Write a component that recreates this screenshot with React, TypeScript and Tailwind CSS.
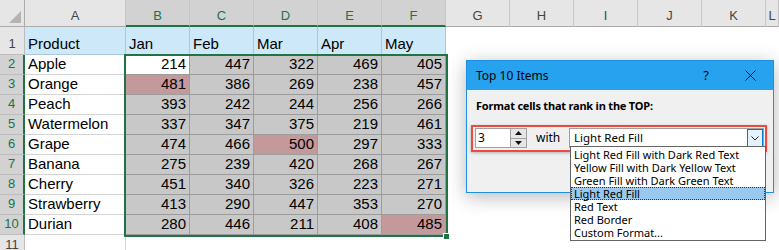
import React from "react";

const COLS = ["A", "B", "C", "D", "E", "F", "G", "H", "I", "J", "K", "L"];
const SELECTED = ["B", "C", "D", "E", "F"];

const HEAD = ["Product", "Jan", "Feb", "Mar", "Apr", "May"];

const ROWS: [string, number[]][] = [
  ["Apple", [214, 447, 322, 469, 405]],
  ["Orange", [481, 386, 269, 238, 457]],
  ["Peach", [393, 242, 244, 256, 266]],
  ["Watermelon", [337, 347, 375, 219, 461]],
  ["Grape", [474, 466, 500, 297, 333]],
  ["Banana", [275, 239, 420, 268, 267]],
  ["Cherry", [451, 340, 326, 223, 271]],
  ["Strawberry", [413, 290, 447, 353, 270]],
  ["Durian", [280, 446, 211, 408, 485]],
];

// top 3 values -> light red fill
const TOP = new Set(["1-0", "4-2", "8-4"]);

const FORMATS = [
  "Light Red Fill with Dark Red Text",
  "Yellow Fill with Dark Yellow Text",
  "Green Fill with Dark Green Text",
  "Light Red Fill",
  "Red Text",
  "Red Border",
  "Custom Format...",
];

function RowHeader({ n, selected }: { n: number; selected?: boolean }) {
  return (
    <div
      className={
        selected
          ? "flex items-end justify-center border-b border-[#bdbdbd] border-r-2 border-r-[#217346] bg-[#d2d2d2] pb-px text-[13px] text-[#217346]"
          : "flex items-end justify-center border-b border-r border-[#bdbdbd] bg-[#e6e6e6] pb-px text-[13px] text-[#444]"
      }
    >
      {n}
    </div>
  );
}

function Sheet() {
  return (
    <div className="grid h-[250px] grid-cols-[25px_101px_64px_64px_64px_64px_64px_64px_64px_64px_64px_64px_1fr] grid-rows-[27px_28px_repeat(9,20px)_1fr] font-['Liberation_Sans',Arial,sans-serif] text-[15px] text-black">
      {/* column header row */}
      <div className="relative border-b border-r border-[#ababab] bg-[#e6e6e6]">
        <svg className="absolute bottom-[3px] right-[3px]" width="12" height="12" viewBox="0 0 12 12">
          <path d="M12 0 L12 12 L0 12 Z" fill="#b4b4b4" />
        </svg>
      </div>
      {COLS.map((c) =>
        SELECTED.includes(c) ? (
          <div
            key={c}
            className="flex items-end justify-center border-r border-[#c6c6c6] border-b-2 border-b-[#217346] bg-[#d2d2d2] pb-[3px] text-[13px] leading-[13px] text-[#217346]"
          >
            {c}
          </div>
        ) : (
          <div
            key={c}
            className="flex items-end justify-center border-b border-r border-b-[#ababab] border-r-[#c6c6c6] bg-[#e6e6e6] pb-[4px] text-[13px] leading-[13px] text-[#444]"
          >
            {c}
          </div>
        )
      )}

      {/* row 1 */}
      <RowHeader n={1} />
      {HEAD.map((h) => (
        <div key={h} className="flex items-end border-b border-r border-[#a9c8dc] bg-[#cce8f9] pl-[3px] leading-[20px]">
          {h}
        </div>
      ))}
      {COLS.slice(6).map((c) => (
        <div key={c} className="bg-white" />
      ))}

      {/* rows 2-10 */}
      {ROWS.map(([name, vals], r) => (
        <React.Fragment key={name}>
          <RowHeader n={r + 2} selected />
          <div className="flex items-center border-b border-r border-[#d4d4d4] bg-white pl-[3px]">{name}</div>
          {vals.map((v, c) => (
            <div
              key={c}
              className={
                r === 0 && c === 0
                  ? "flex items-center justify-end border-b border-r border-[#9c9c9c] bg-white pr-[3px]"
                  : TOP.has(`${r}-${c}`)
                    ? "flex items-center justify-end border-b border-r border-[#9c9c9c] bg-[#c4999c] pr-[3px]"
                    : "flex items-center justify-end border-b border-r border-[#9c9c9c] bg-[#c8c8c8] pr-[3px]"
              }
            >
              {v}
            </div>
          ))}
          {COLS.slice(6).map((c) => (
            <div key={c} className="bg-white" />
          ))}
        </React.Fragment>
      ))}

      {/* row 11 */}
      <RowHeader n={11} />
      <div className="border-r border-[#d4d4d4] bg-white" />
    </div>
  );
}

function SpinBox() {
  return (
    <div className="flex h-[20px] w-[52px] border border-[#a0a0a0] bg-white">
      <div className="flex-1 pl-[2px] text-[12px] leading-[18px]">3</div>
      <div className="flex w-[16px] flex-col border-l border-[#a0a0a0] bg-[#e6e6e6]">
        <div className="flex flex-1 items-center justify-center border-b border-[#a0a0a0]">
          <svg width="7" height="4" viewBox="0 0 7 4">
            <path d="M3.5 0 L7 4 L0 4 Z" fill="#111" />
          </svg>
        </div>
        <div className="flex flex-1 items-center justify-center">
          <svg width="7" height="4" viewBox="0 0 7 4">
            <path d="M0 0 L7 0 L3.5 4 Z" fill="#111" />
          </svg>
        </div>
      </div>
    </div>
  );
}

function Dialog() {
  return (
    <div className="absolute left-[466px] top-[60px] w-[308px] font-['Noto_Sans',sans-serif] text-black">
      <div className="h-[133px] border border-[#1c8fe3] bg-[#f0f0f0] shadow-[0_4px_18px_rgba(0,0,0,0.28)]">
        <div className="flex h-[29px] items-center bg-[#26a2ef] pl-[9px] pr-[17px] text-[12px]">
          <span className="flex-1">Top 10 Items</span>
          <span className="mr-[36px] text-[13px]">?</span>
          <svg width="11" height="11" viewBox="0 0 11 11">
            <path d="M0.5 0.5 L10.5 10.5 M10.5 0.5 L0.5 10.5" stroke="#111" strokeWidth="1" />
          </svg>
        </div>
        <div className="pl-[9px] pt-[8px] text-[11px] font-bold tracking-[-0.2px]">Format cells that rank in the TOP:</div>
        <div className="ml-[4px] mt-[10px] flex h-[27px] w-[296px] items-center border-2 border-[#ee4a3f] pl-[2px] shadow-[0_1px_3px_rgba(0,0,0,0.25)]">
          <SpinBox />
          <span className="ml-[9px] w-[33px] text-[12px]">with</span>
          <div className="flex h-[20px] w-[195px] items-center border border-[#a0a0a0] bg-white pl-[4px] text-[11.5px]">
            <span className="flex-1">Light Red Fill</span>
            <div className="flex h-[18px] w-[16px] items-center justify-center border border-[#0078d7] bg-[#e5f1fb]">
              <svg width="8" height="5" viewBox="0 0 8 5">
                <path d="M0.5 0.5 L4 4 L7.5 0.5" stroke="#222" strokeWidth="1" fill="none" />
              </svg>
            </div>
          </div>
        </div>
      </div>
      <div className="absolute left-[104px] top-[86px] w-[196px] border border-[#646464] bg-white py-px text-[11px] leading-[13px]">
        {FORMATS.map((f) =>
          f === "Light Red Fill" ? (
            <div key={f} className="border border-dotted border-[#333] bg-[#99c9ef] pl-[2px] leading-[11px]">
              {f}
            </div>
          ) : (
            <div key={f} className="pl-[3px]">
              {f}
            </div>
          )
        )}
      </div>
    </div>
  );
}

export default function App() {
  return (
    <div className="relative h-[250px] w-[779px] overflow-hidden bg-white">
      <Sheet />
      {/* selection B2:F10 */}
      <div className="pointer-events-none absolute left-[124px] top-[54px] h-[183px] w-[324px] border-2 border-[#217346]" />
      <div className="absolute left-[443px] top-[233px] h-[7px] w-[7px] border border-white bg-[#217346]" />
      <Dialog />
    </div>
  );
}
